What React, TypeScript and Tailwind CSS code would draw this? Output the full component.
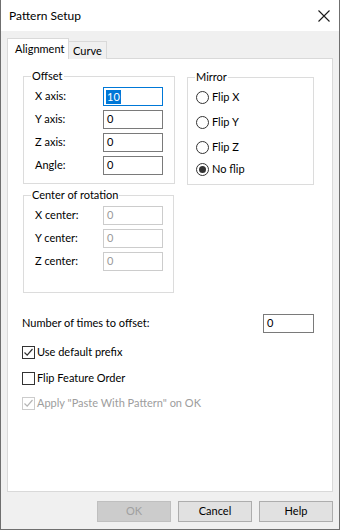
import React from 'react';

const font = { fontFamily: 'Lato, "Noto Sans", sans-serif' };

const TextBox: React.FC<{ value: string; focused?: boolean; disabled?: boolean; w?: string }> = ({ value, focused, disabled, w = 'w-[60px]' }) => (
  <div
    className={`${w} h-[19px] bg-white border flex items-center pl-[2px] text-[11px] ${
      focused ? 'border-[#0078d7]' : disabled ? 'border-[#cccccc] text-[#9a9a9a]' : 'border-[#7a7a7a] text-black'
    }`}
  >
    {focused ? <span className="bg-[#0078d7] text-white leading-[14px] px-[1px]">{value}</span> : <span className="pl-[1px]">{value}</span>}
  </div>
);

const Group: React.FC<{ title: string; className: string; children: React.ReactNode }> = ({ title, className, children }) => (
  <div className={`relative border border-[#dcdcdc] ${className}`}>
    <span className="absolute -top-[9px] left-[7px] bg-white px-[1px] text-[11px] leading-[16px] text-black">{title}</span>
    {children}
  </div>
);

const Row: React.FC<{ label: string; value: string; focused?: boolean; disabled?: boolean }> = ({ label, value, focused, disabled }) => (
  <div className="flex items-center">
    <span className="w-[79px] pl-[11px] text-[11px] text-black">{label}</span>
    <TextBox value={value} focused={focused} disabled={disabled} />
  </div>
);

const Radio: React.FC<{ label: string; checked?: boolean; className?: string }> = ({ label, checked, className = '' }) => (
  <div className={`flex items-center h-[13px] ${className}`}>
    <span className="w-[13px] h-[13px] rounded-full border border-[#333333] bg-white flex items-center justify-center">
      {checked && <span className="w-[7px] h-[7px] rounded-full bg-[#333333]" />}
    </span>
    <span className="ml-[3px] text-[11px] text-black">{label}</span>
  </div>
);

const Check: React.FC<{ label: string; checked?: boolean; disabled?: boolean; className?: string }> = ({ label, checked, disabled, className = '' }) => (
  <div className={`flex items-center h-[13px] ${className}`}>
    <span
      className={`w-[13px] h-[13px] border bg-white flex items-center justify-center ${
        disabled ? 'border-[#cccccc]' : 'border-[#333333]'
      }`}
    >
      {checked && (
        <svg width="11" height="11" viewBox="0 0 11 11">
          <path d="M1.5 5.5 L4.2 8.2 L9.5 2" fill="none" stroke={disabled ? '#b5b5b5' : '#333333'} strokeWidth="1.2" />
        </svg>
      )}
    </span>
    <span className={`ml-[2px] text-[11px] ${disabled ? 'text-[#9d9d9d]' : 'text-black'}`}>{label}</span>
  </div>
);

const Btn: React.FC<{ label: string; disabled?: boolean }> = ({ label, disabled }) => (
  <div
    className={`w-[74px] h-[21px] border flex items-center justify-center text-[11px] ${
      disabled ? 'bg-[#cccccc] border-[#bfbfbf] text-[#a0a0a0]' : 'bg-[#e1e1e1] border-[#adadad] text-black'
    }`}
  >
    {label}
  </div>
);

export default function App() {
  return (
    <div className="w-[340px] h-[530px] flex flex-col bg-[#f0f0f0] border-x border-b border-[#6f6f6f]" style={font}>
      {/* title bar */}
      <div className="h-[31px] bg-white flex items-center justify-between pl-[8px] pr-[9px]">
        <span className="text-[12px] text-black">Pattern Setup</span>
        <svg width="12" height="12" viewBox="0 0 12 12">
          <path d="M0.5 0.5 L11.5 11.5 M11.5 0.5 L0.5 11.5" stroke="#1a1a1a" strokeWidth="1.1" />
        </svg>
      </div>

      <div className="flex-1 flex flex-col px-[6px] pt-[7px]">
        {/* tabs */}
        <div className="flex items-end h-[21px] relative z-10">
          <div className="w-[62px] h-[21px] bg-white border-x border-t border-[#d9d9d9] pl-[7px] pt-[2px] text-[11px] text-black">
            Alignment
          </div>
          <div className="w-[38px] h-[18px] bg-[#f0f0f0] border-r border-t border-[#d9d9d9] pl-[4px] pt-[1px] text-[11px] text-black">
            Curve
          </div>
        </div>

        {/* panel */}
        <div className="-mt-[1px] h-[434px] bg-white border border-[#d9d9d9] flex flex-col">
          <div className="flex pl-[15px] pt-[17px]">
            <div className="flex flex-col gap-[11px]">
              <Group title="Offset" className="w-[152px] h-[108px] pt-[10px]">
                <div className="flex flex-col gap-[4px]">
                  <Row label="X axis:" value="10" focused />
                  <Row label="Y axis:" value="0" />
                  <Row label="Z axis:" value="0" />
                  <Row label="Angle:" value="0" />
                </div>
              </Group>
              <Group title="Center of rotation" className="w-[151px] h-[98px] pt-[10px]">
                <div className="flex flex-col gap-[4px]">
                  <Row label="X center:" value="0" disabled />
                  <Row label="Y center:" value="0" disabled />
                  <Row label="Z center:" value="0" disabled />
                </div>
              </Group>
            </div>
            <Group title="Mirror" className="ml-[12px] mt-[1px] w-[127px] h-[108px] pl-[8px] pt-[13px]">
              <Radio label="Flip X" className="mb-[12px]" />
              <Radio label="Flip Y" className="mb-[12px]" />
              <Radio label="Flip Z" className="mb-[9px]" />
              <Radio label="No flip" checked />
            </Group>
          </div>

          <div className="flex items-center justify-between pl-[14px] pr-[18px] mt-[21px]">
            <span className="text-[11px] text-black">Number of times to offset:</span>
            <TextBox value="0" w="w-[51px]" />
          </div>

          <div className="flex flex-col pl-[14px] mt-[13px]">
            <Check label="Use default prefix" checked className="mb-[13px]" />
            <Check label="Flip Feature Order" className="mb-[12px]" />
            <Check label={'Apply "Paste With Pattern" on OK'} checked disabled />
          </div>
        </div>

        {/* buttons */}
        <div className="flex justify-end gap-[7px] mt-[9px]">
          <Btn label="OK" disabled />
          <Btn label="Cancel" />
          <Btn label="Help" />
        </div>
      </div>
    </div>
  );
}
